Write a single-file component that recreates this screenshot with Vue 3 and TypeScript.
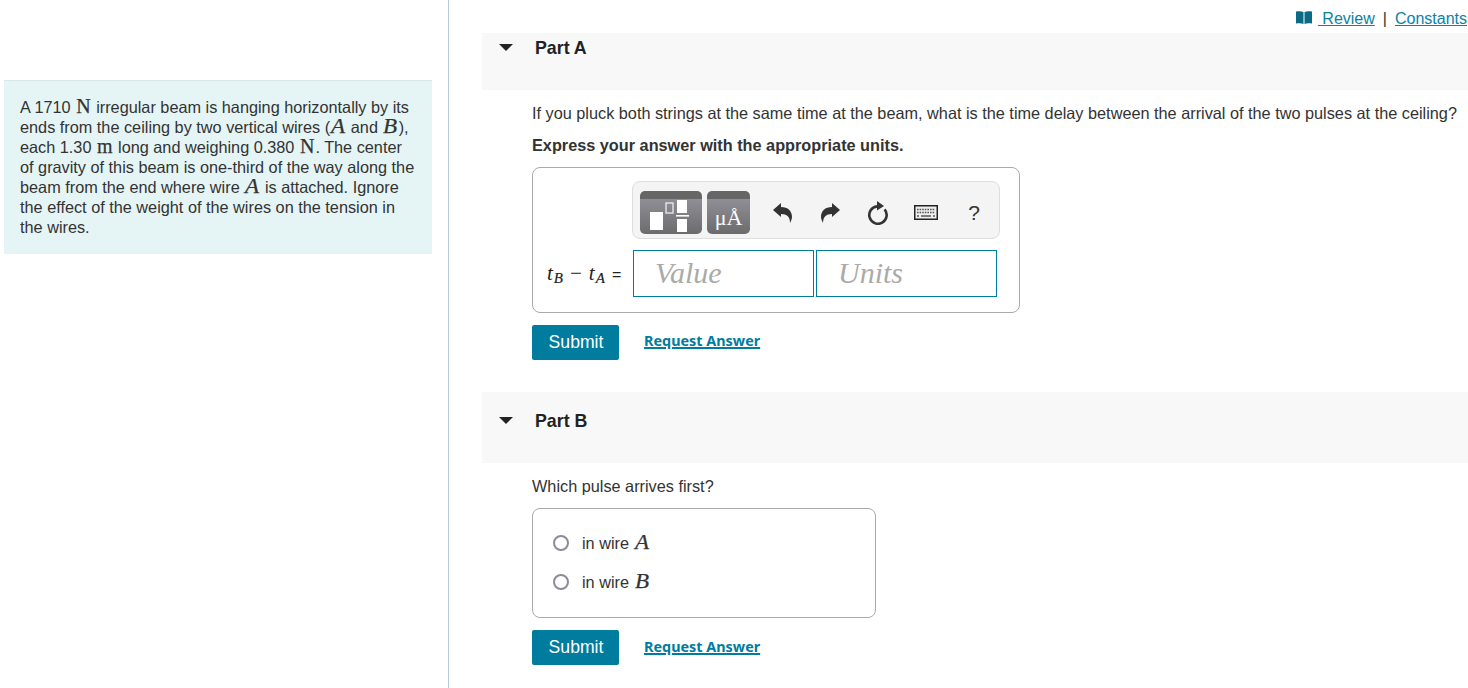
<script setup lang="ts">
  import { ref } from 'vue';

  const choices = ['A', 'B'];
  const picked = ref('');
  const value = ref('');
  const units = ref('');
</script>

<template>
  <div class="page">
    <aside class="left">
      <div class="stem">
        A 1710 <span class="mr">N</span> irregular beam is hanging horizontally by its<br>
        ends from the ceiling by two vertical wires (<i class="mi">A</i> and <i class="mi">B</i>),<br>
        each 1.30 <span class="mr">m</span> long and weighing 0.380 <span class="mr">N</span>. The center<br>
        of gravity of this beam is one-third of the way along the<br>
        beam from the end where wire <i class="mi">A</i> is attached. Ignore<br>
        the effect of the weight of the wires on the tension in<br>
        the wires.
      </div>
    </aside>

    <main class="right">
      <div class="top-links">
        <svg class="book" width="16" height="13" viewBox="0 0 16 13">
          <path d="M0 0.5 C3 0 5.500 0 7.500 1 V13 C5.500 12 3 12 0 12.500 Z M8.500 1 C10.500 0 13 0 16 0.500 V12.500 C13 12 10.500 12 8.500 13 Z" fill="#0b6b85" />
        </svg>
        <a href="#">&nbsp;Review</a>
        <span class="sep">|</span>
        <a href="#">Constants</a>
      </div>

      <section class="part-head head-a">
        <span class="caret"></span>
        <h2>Part A</h2>
      </section>

      <div class="part-body body-a">
        <p class="question">If you pluck both strings at the same time at the beam, what is the time delay between the arrival of the two pulses at the ceiling?</p>
        <p class="instruction">Express your answer with the appropriate units.</p>

        <div class="answer-box">
          <div class="toolbar">
            <div class="tpl-btn tpl-wide">
              <svg width="62" height="35" viewBox="0 0 62 35">
                <rect x="10" y="13" width="13" height="18" fill="#fff" />
                <rect x="26" y="4" width="7" height="10" fill="none" stroke="#e6e6e6" stroke-width="1.4" />
                <rect x="37" y="1" width="10" height="13" fill="#fff" />
                <rect x="36" y="16" width="13" height="1.600" fill="#fff" />
                <rect x="37" y="20" width="10" height="13" fill="#fff" />
              </svg>
            </div>
            <div class="tpl-btn tpl-units"><span>μÅ</span></div>
            <div class="tool">
              <svg width="19" height="20" viewBox="0 0 19 20">
                <path d="M0 7 L8 0 V4 C15 4 19 8 19 14 C19 16 18 18 17 20 C17 14 14 11 8 11 V14 Z" fill="#333" />
              </svg>
            </div>
            <div class="tool">
              <svg width="19" height="20" viewBox="0 0 19 20">
                <path d="M19 7 L11 0 V4 C4 4 0 8 0 14 C0 16 1 18 2 20 C2 14 5 11 11 11 V14 Z" fill="#333" />
              </svg>
            </div>
            <div class="tool">
              <svg width="22" height="24" viewBox="0 0 22 24">
                <path d="M10 5.400 A8.700 8.700 0 1 0 17.600 8.400" fill="none" stroke="#333" stroke-width="2.600" />
                <path d="M10 0 L17 5 L10 9.500 Z" fill="#333" />
              </svg>
            </div>
            <div class="tool">
              <svg width="24" height="15" viewBox="0 0 24 15">
                <rect x="0.750" y="0.750" width="22.500" height="13.500" fill="#eee" stroke="#222" stroke-width="1.500" />
                <path d="M3 4.500 H21 M3 7.500 H21" stroke="#555" stroke-width="1.500" stroke-dasharray="1.600 1" />
                <path d="M3 11 H5 M7 11 H17 M19 11 H21" stroke="#555" stroke-width="1.500" />
              </svg>
            </div>
            <div class="tool help">?</div>
          </div>

          <div class="answer-row">
            <label class="answer-label"><i>t</i><sub>B</sub><span class="minus">−</span><i>t</i><sub>A</sub><span class="eq">=</span></label>
            <input v-model="value" class="answer-input" type="text" placeholder="Value" />
            <input v-model="units" class="answer-input" type="text" placeholder="Units" />
          </div>
        </div>

        <div class="actions">
          <button type="button" class="submit">Submit</button>
          <a href="#" class="request">Request Answer</a>
        </div>
      </div>

      <section class="part-head head-b">
        <span class="caret"></span>
        <h2>Part B</h2>
      </section>

      <div class="part-body body-b">
        <p class="question">Which pulse arrives first?</p>

        <div class="choices">
          <label v-for="c in choices" :key="c" class="choice">
            <input v-model="picked" type="radio" name="wire" :value="c" />
            <span>in wire <i class="mi">{{ c }}</i></span>
          </label>
        </div>

        <div class="actions actions-b">
          <button type="button" class="submit">Submit</button>
          <a href="#" class="request">Request Answer</a>
        </div>
      </div>
    </main>
  </div>
</template>

<style>
  html, body {
    margin: 0;
    background: #fff;
  }
</style>

<style scoped>
  .page {
    display: flex;
    height: 688px;
    overflow: hidden;
    font-family: "Liberation Sans", Arial, sans-serif;
    font-size: 16.27px;
    color: #333;
  }

  .left {
    box-sizing: border-box;
    width: 449px;
    flex: none;
    padding: 80px 16px 0 4px;
    border-right: 1px solid #b9cde2;
  }
  .stem {
    box-sizing: border-box;
    height: 174px;
    padding: 16px 0 0 16px;
    background: #e5f5f6;
    border-top: 1px solid #d8e6ea;
    line-height: 20px;
    white-space: nowrap;
  }
  .mr, .mi {
    font-family: "Liberation Serif", "Times New Roman", serif;
    font-size: 20px;
    line-height: 0;
    -webkit-text-stroke: 0.25px #333;
  }
  .mr {
    margin: 0 1px;
  }
  .mi {
    display: inline-block;
    margin: 0 2px;
    transform: scaleX(1.15);
  }

  .right {
    flex: 1;
    min-width: 0;
    padding-left: 33px;
  }
  .top-links {
    height: 33px;
    box-sizing: border-box;
    padding: 10px 1px 0 0;
    display: flex;
    justify-content: flex-end;
    align-items: baseline;
    font-size: 16px;
    line-height: 18px;
    color: #0a82a3;
  }
  .top-links a {
    color: #0a82a3;
  }
  .book {
    margin-right: 6px;
    align-self: flex-start;
    margin-top: 1px;
  }
  .sep {
    margin: 0 8px;
    color: #333;
  }

  .part-head {
    background: #f8f8f8;
    display: flex;
    align-items: flex-start;
  }
  .head-a {
    height: 57px;
    padding-top: 5px;
    box-sizing: border-box;
  }
  .head-b {
    height: 71px;
    padding-top: 19px;
    box-sizing: border-box;
  }
  .caret {
    width: 0;
    height: 0;
    margin: 6px 0 0 17px;
    border-left: 7px solid transparent;
    border-right: 7px solid transparent;
    border-top: 7px solid #222;
  }
  .part-head h2 {
    margin: 0 0 0 22px;
    font-size: 17.8px;
    line-height: 20px;
    font-weight: bold;
    color: #222;
  }

  .part-body {
    padding-left: 50px;
  }
  .body-a {
    height: 302px;
    padding-top: 14px;
    box-sizing: border-box;
  }
  .body-a .request {
    margin-bottom: 3px;
  }
  .body-b {
    padding-top: 14px;
  }
  .question {
    margin: 0;
    line-height: 18px;
    white-space: nowrap;
  }
  .instruction {
    margin: 14px 0 0;
    line-height: 18px;
    font-weight: bold;
  }

  .answer-box {
    box-sizing: border-box;
    width: 488px;
    height: 146px;
    margin-top: 13px;
    padding: 13px 0 0 14px;
    border: 1px solid #aaa;
    border-radius: 8px;
  }
  .toolbar {
    box-sizing: border-box;
    display: flex;
    align-items: center;
    width: 368px;
    height: 58px;
    margin-left: 85px;
    padding-left: 7px;
    background: #f4f4f4;
    border: 1px solid #ddd;
    border-radius: 8px;
  }
  .tpl-btn {
    box-sizing: border-box;
    height: 43px;
    margin-top: 5px;
    border-top: 8px solid #666;
    border-radius: 5px;
    background: linear-gradient(#918f96, #6b6b6d);
    color: #fff;
  }
  .tpl-wide {
    width: 62px;
    margin-right: 5px;
  }
  .tpl-wide svg {
    display: block;
  }
  .tpl-units {
    width: 43px;
    margin-right: 8px;
    text-align: center;
    font-family: "Liberation Serif", serif;
    font-size: 22px;
    line-height: 38px;
    white-space: nowrap;
  }
  .tool {
    width: 48px;
    flex: none;
    height: 24px;
    margin-top: 5px;
    display: flex;
    justify-content: center;
    align-items: center;
  }
  .help {
    font-size: 21px;
    color: #333;
  }

  .answer-row {
    display: flex;
    align-items: center;
    margin-top: 11px;
  }
  .answer-label {
    width: 86px;
    flex: none;
    font-family: "Liberation Serif", serif;
    font-size: 21px;
    color: #222;
    white-space: nowrap;
  }
  .answer-label sub {
    font-size: 15px;
    font-style: italic;
    line-height: 0;
    vertical-align: -3px;
    margin-left: 1px;
    -webkit-text-stroke: 0.2px #222;
  }
  .answer-label .minus {
    margin: 0 7px;
    font-size: 21px;
  }
  .answer-label .eq {
    margin-left: 7px;
    font-family: "Liberation Sans", sans-serif;
    font-size: 16px;
  }
  .answer-input {
    box-sizing: border-box;
    width: 181px;
    height: 47px;
    margin-right: 2px;
    padding: 0 0 2px 21px;
    border: 1px solid #007c9e;
    border-radius: 0;
    outline: none;
    font-family: "Liberation Serif", serif;
    font-style: italic;
    font-size: 30px;
    color: #333;
  }
  .answer-input::placeholder {
    color: #aaa;
    opacity: 1;
  }

  .actions {
    display: flex;
    align-items: center;
    margin-top: 12px;
  }
  .submit {
    width: 87px;
    height: 35px;
    padding: 0 0 0 1px;
    border: none;
    border-radius: 2px;
    background: #007c9e;
    color: #fff;
    font-family: "Liberation Sans", sans-serif;
    font-size: 17.6px;
  }
  .request {
    margin: 0 0 1px 25px;
    font-family: "Noto Sans", sans-serif;
    font-size: 14.4px;
    line-height: 18px;
    font-weight: bold;
    color: #007c9e;
    text-decoration-thickness: 2px;
  }

  .choices {
    box-sizing: border-box;
    width: 344px;
    height: 110px;
    margin-top: 13px;
    padding: 14px 0 0 20px;
    border: 1px solid #aaa;
    border-radius: 8px;
  }
  .choice {
    display: flex;
    align-items: center;
    height: 39px;
  }
  .choice span {
    padding-top: 1px;
  }
  .choice input {
    appearance: none;
    box-sizing: border-box;
    width: 16px;
    height: 16px;
    margin: 0 13px 0 0;
    border: 2px solid #8b8b9b;
    border-radius: 50%;
    background: #fff;
  }
  .choice input:checked {
    background: #007c9e;
  }
</style>
